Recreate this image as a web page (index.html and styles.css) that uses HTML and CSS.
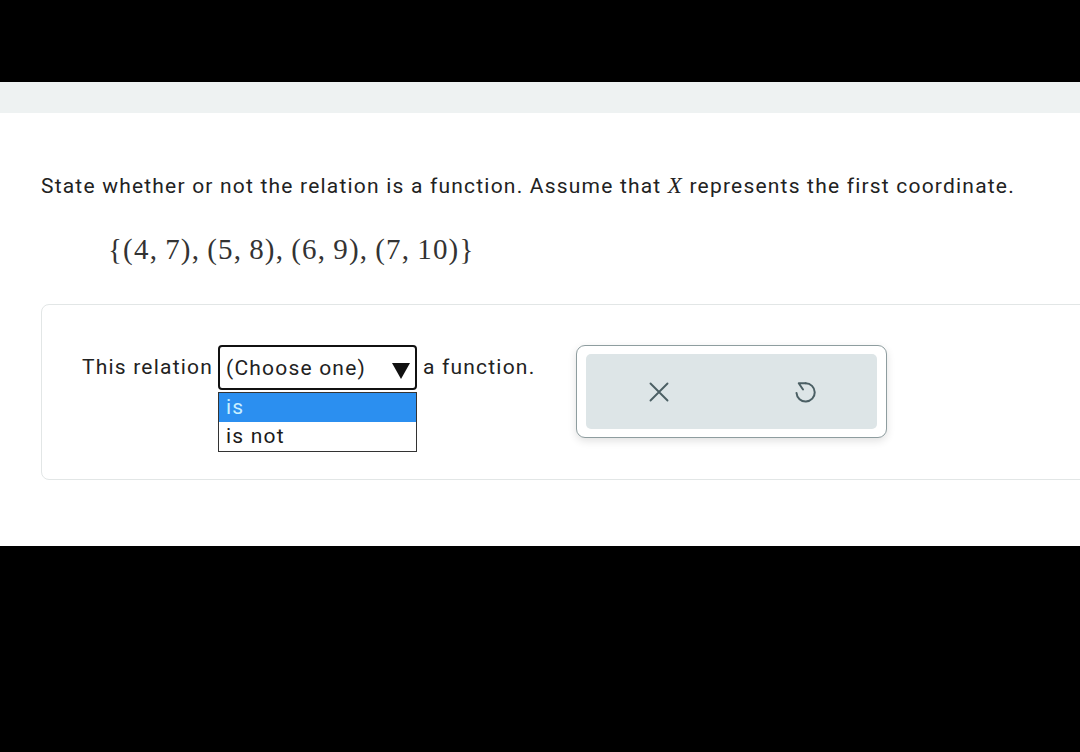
FILE: index.html
```html
<!DOCTYPE html>
<html lang="en">
<head>
  <meta charset="UTF-8">
  <title>Relation question</title>
  <link rel="stylesheet" href="styles.css">
</head>
<body>
  <div class="screen">
    <div class="topbar"></div>

    <div class="content">
      <p class="question">State whether or not the relation is a function. Assume that <span class="var">X</span> represents the first coordinate.</p>

      <div class="math">{(4,&#8201;7),&#8201;(5,&#8201;8),&#8201;(6,&#8201;9),&#8201;(7,&#8201;10)}</div>

      <!-- Caja de respuesta -->
      <div class="answer">
        <div class="answer-row">
          <span class="label">This relation</span>
          <div class="picker">
            <div class="select">
              <span>(Choose one)</span>
              <span class="caret"></span>
            </div>
            <ul class="options">
              <li class="option selected">is</li>
              <li class="option">is not</li>
            </ul>
          </div>
          <span class="label">a function.</span>

          <div class="tools">
            <div class="tools-inner">
              <button class="tool" type="button" aria-label="Clear">
                <svg width="24" height="24" viewBox="0 0 24 24" fill="none" stroke="#4b5f64" stroke-width="1.9" stroke-linecap="round">
                  <path d="M3.5 3.5 L20.5 20.5 M20.5 3.5 L3.5 20.5"/>
                </svg>
              </button>
              <button class="tool" type="button" aria-label="Reset">
                <svg width="30" height="30" viewBox="0 0 24 24" fill="none" stroke="#4b5f64" stroke-width="1.6" stroke-linecap="round" stroke-linejoin="round">
                  <path d="M12.5 5 A7.3 7.3 0 1 1 5.2 12.8"/>
                  <path d="M12.5 5 H7 L10.4 10"/>
                </svg>
              </button>
            </div>
          </div>
        </div>
      </div>
    </div>
  </div>
</body>
</html>
```

FILE: styles.css
```css
/* Estilos generales */
body {
  margin: 0;
  padding: 0;
  background: #000;
  font-family: 'Roboto', 'Liberation Sans', sans-serif;
  font-size: 21px;
  letter-spacing: 1.2px;
  color: #222;
  overflow: hidden;
}

.screen {
  margin-top: 82px;
  width: 1080px;
}

.topbar {
  height: 31px;
  background: #eef2f2;
}

.content {
  height: 433px;
  background: #fff;
  padding: 59px 0 0 41px;
  box-sizing: border-box;
  overflow: hidden;
}

/* Enunciado */
.question {
  margin: 0;
  line-height: 28px;
  white-space: nowrap;
}

.var {
  font-family: 'Liberation Serif', serif;
  font-style: italic;
  font-size: 23px;
}

.math {
  margin: 30px 0 0 67px;
  font-family: 'Liberation Serif', 'DejaVu Serif', serif;
  font-size: 29px;
  letter-spacing: 1.2px;
  line-height: 38px;
  color: #333;
}

/* Caja de respuesta */
.answer {
  margin-top: 36px;
  width: 1100px;
  height: 176px;
  box-sizing: border-box;
  border: 1px solid #e2e6e6;
  border-radius: 8px;
  padding: 40px 0 0 40px;
}

.answer-row {
  display: flex;
  align-items: flex-start;
}

.label {
  line-height: 24px;
  margin-top: 10px;
}

.picker {
  position: relative;
  margin: 0 6px 0 5px;
}

.select {
  width: 199px;
  height: 45px;
  box-sizing: border-box;
  border: 2px solid #111;
  border-radius: 4px;
  display: flex;
  align-items: center;
  justify-content: space-between;
  padding: 0 5px 0 6px;
  color: #222;
  background: #fff;
}

/* Flecha del desplegable */
.caret {
  width: 0;
  height: 0;
  margin-top: 6px;
  border-left: 9px solid transparent;
  border-right: 9px solid transparent;
  border-top: 16px solid #111;
}

.options {
  position: absolute;
  top: 47px;
  left: 0;
  width: 199px;
  margin: 0;
  padding: 0;
  list-style: none;
  box-sizing: border-box;
  border: 1px solid #333;
  background: #fff;
}

.option {
  height: 29px;
  line-height: 29px;
  padding-left: 7px;
  color: #1a1a1a;
}

.option.selected {
  background: #2b8ff0;
  color: #c9f0ff;
}

/* Botones de herramientas */
.tools {
  margin-left: 41px;
  width: 311px;
  height: 93px;
  box-sizing: border-box;
  border: 1px solid #8e9d9f;
  border-radius: 9px;
  padding: 8px 9px;
  background: #fff;
  box-shadow: 0 3px 8px rgba(0, 0, 0, 0.12);
}

.tools-inner {
  display: flex;
  height: 100%;
  background: #dde5e7;
  border-radius: 5px;
}

.tool {
  flex: 1;
  border: none;
  background: transparent;
  display: flex;
  align-items: center;
  justify-content: center;
  padding: 0;
  cursor: pointer;
}
```
